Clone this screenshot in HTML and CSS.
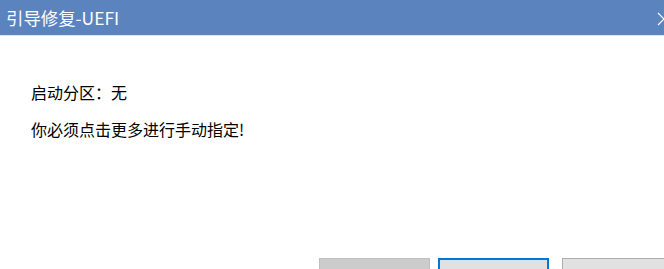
FILE: index.html
```html
<!DOCTYPE html>
<html>
<head>
<meta charset="utf-8">
<link rel="stylesheet" href="styles.css">
</head>
<body>
<div class="dialog">
  <div class="titlebar">
    <span class="title">引导修复-UEFI</span>
    <svg class="close" width="14" height="14" viewBox="0 0 14 14"><path d="M1 1 L13 13 M13 1 L1 13" stroke="#fff" stroke-width="1.2" fill="none"/></svg>
  </div>
  <div class="content">
    <p class="line">启动分区：无</p>
    <p class="line second">你必须点击更多进行手动指定!</p>
  </div>
  <div class="buttons">
    <button class="btn disabled">修复</button>
    <button class="btn focused">更多</button>
    <button class="btn last">取消</button>
  </div>
</div>
</body>
</html>
```
FILE: styles.css
```css
html, body {
  margin: 0;
  padding: 0;
  background: #ffffff;
  overflow: hidden;
}
.dialog {
  width: 700px;
  height: 300px;
  font-family: "Noto Sans CJK SC", "DejaVu Sans", sans-serif;
}
.titlebar {
  height: 35px;
  background: #5b84bf;
  display: flex;
  align-items: center;
  position: relative;
  border-bottom: 1px solid #dfe7f2;
}
.title {
  color: #ffffff;
  font-size: 17.4px;
  margin-left: 6px;
  letter-spacing: 0;
  line-height: 35px;
}
.close {
  position: absolute;
  left: 657px;
  top: 12px;
}
.content {
  padding: 46px 0 0 31px;
}
.line {
  margin: 0;
  font-size: 16px;
  line-height: 21px;
  color: #000;
}
.line.second {
  margin-top: 16px;
}
.buttons {
  display: flex;
  padding-left: 319px;
  margin-top: 118px;
}
.btn {
  width: 111px;
  height: 33px;
  box-sizing: border-box;
  font-family: "Noto Sans CJK SC", sans-serif;
  font-size: 14px;
  background: #e1e1e1;
  border: 1px solid #adadad;
  padding: 0;
  flex: none;
}
.btn.disabled {
  background: #cccccc;
  border-color: #bfbfbf;
  color: #838383;
}
.btn.focused {
  margin-left: 8px;
  border: 2px solid #0078d7;
}
.btn.last {
  margin-left: 13px;
}
```
